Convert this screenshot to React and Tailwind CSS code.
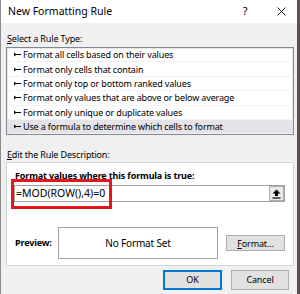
import React from "react";

const rules = [
  "Format all cells based on their values",
  "Format only cells that contain",
  "Format only top or bottom ranked values",
  "Format only values that are above or below average",
  "Format only unique or duplicate values",
  "Use a formula to determine which cells to format",
];

function Bullet() {
  return (
    <svg width="7" height="5" viewBox="0 0 7 5" className="shrink-0">
      <path d="M0 0.5 L0 4.5 L2.5 2.5 Z" fill="#000" />
      <path d="M1 2.5 H7" stroke="#000" strokeWidth="1" />
    </svg>
  );
}

function UploadIcon() {
  return (
    <svg width="9" height="10" viewBox="0 0 9 10">
      <path d="M4.5 0.5 L8.5 4.5 H6 V7 H3 V4.5 H0.5 Z" fill="#000" />
      <path d="M0.5 9 H8.5" stroke="#000" strokeWidth="1.2" />
    </svg>
  );
}

export default function App() {
  return (
    <div
      className="relative w-[300px] h-[294px] bg-[#f0f0f0] border-l border-l-[#8c8c8c] border-r-[3px] border-r-[#5e5252] overflow-hidden text-[9px] tracking-[-0.15px] text-black"
      style={{ fontFamily: '"Noto Sans", "Liberation Sans", sans-serif' }}
    >
      {/* title bar */}
      <div className="h-[23px] bg-white flex items-center pl-[7px]">
        <span className="text-[10.5px] tracking-normal">New Formatting Rule</span>
        <span className="ml-auto text-[11px] w-[10px] text-center mr-[27px]">?</span>
        <svg width="9" height="9" viewBox="0 0 9 9" className="mr-[11px]">
          <path d="M0.5 0.5 L8.5 8.5 M8.5 0.5 L0.5 8.5" stroke="#000" strokeWidth="0.9" />
        </svg>
      </div>

      <div className="pl-[5px]">
        <div className="mt-[9px] h-[14px] leading-[14px] pl-[1px]">
          <span className="underline">S</span>elect a Rule Type:
        </div>

        <div className="mt-[1px] w-[288px] h-[88px] border border-[#828790] bg-white shadow-[inset_0_0_0_1px_#e8e8e8]">
          {rules.map((r, i) => (
            <div
              key={r}
              className={`h-[14.4px] flex items-center gap-[2px] pl-[7px] border-b border-[#f2f2f2] ${
                i === 5 ? "bg-[#e3e3e8]" : ""
              }`}
            >
              <Bullet />
              <span className="leading-none whitespace-nowrap">{r}</span>
            </div>
          ))}
        </div>

        <div className="mt-[13px] h-[14px] leading-[14px] pl-[1px]">
          <span className="underline">E</span>dit the Rule Description:
        </div>

        <div className="w-[288px] h-[104px] border border-[#d5d5d5] bg-white">
          <div className="mt-[6px] h-[14px] leading-[14px] pl-[8px] font-bold">
            Format values where this formula is true:
          </div>
          <div className="mt-[2px] ml-[7px] w-[271px] h-[17px] border border-[#a0a0a0] flex items-center">
            <span className="flex-1 pl-[1px] leading-none text-[10.5px] tracking-normal">=MOD(ROW(),4)=0</span>
            <div className="w-[15px] h-[15px] bg-[#e8e8e8] border border-[#adadad] flex items-center justify-center">
              <UploadIcon />
            </div>
          </div>
          <div className="mt-[25px] pl-[8px] flex items-center">
            <span className="w-[43px] font-bold">Preview:</span>
            <div className="w-[160px] h-[32px] border border-[#a0a0a0] flex items-center justify-center text-[10px]">
              No Format Set
            </div>
            <button className="ml-[8px] w-[59px] h-[16px] bg-[#e1e1e1] border border-[#adadad] flex items-center justify-center leading-none">
              <span className="underline">F</span>ormat...
            </button>
          </div>
        </div>

        <div className="mt-[4px] w-[288px] flex justify-end gap-[9px] pr-[5px]">
          <button className="w-[59px] h-[20px] bg-[#e1e1e1] border-2 border-[#0078d7] flex items-center justify-center">
            OK
          </button>
          <button className="w-[58px] h-[20px] bg-[#e1e1e1] border border-[#adadad] flex items-center justify-center">
            Cancel
          </button>
        </div>
      </div>

      {/* red annotation box */}
      <div className="absolute left-[10px] top-[179px] w-[101px] h-[30px] border-[3px] border-[#e8141c]" />
    </div>
  );
}
